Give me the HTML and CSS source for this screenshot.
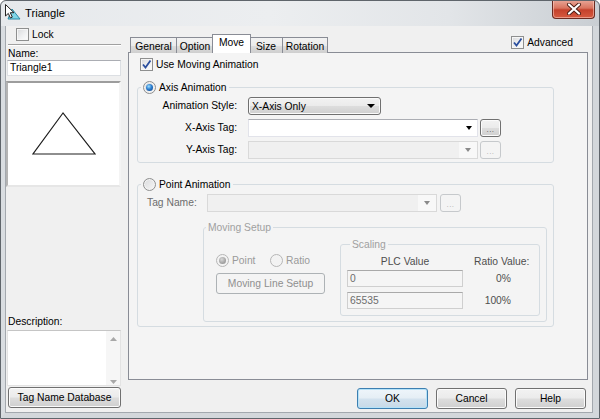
FILE: index.html
```html
<!DOCTYPE html>
<html>
<head>
<meta charset="utf-8">
<title>Triangle</title>
<link rel="stylesheet" href="styles.css">
</head>
<body>
<div class="window">
  <div class="titlebar">
    <svg class="appicon" width="18" height="18" viewBox="0 0 18 18">
      <polygon points="8,6 16,16 4,16" fill="#7fd6e8" stroke="#2a8aa6" stroke-width="1"/>
      <path d="M1.5 1.5 L1.5 13 L4.3 10.4 L6.4 15 L8.3 14.1 L6.3 9.7 L10 9.7 Z" fill="#fff" stroke="#222" stroke-width="1" stroke-linejoin="round"/>
    </svg>
    <span class="title">Triangle</span>
    <div class="close">
      <svg width="16" height="12" viewBox="0 0 16 12">
        <path d="M3 1.5 L13 10.5 M13 1.5 L3 10.5" stroke="#4a1d14" stroke-width="4" stroke-linecap="round"/>
        <path d="M3 1.5 L13 10.5 M13 1.5 L3 10.5" stroke="#ffffff" stroke-width="2.2" stroke-linecap="round"/>
      </svg>
    </div>
  </div>
  <div class="frame">
    <div class="client">
      <div class="left">
        <div class="chk lock"><span class="box"></span><span>Lock</span></div>
        <div class="sep"></div>
        <div class="lbl name-lbl">Name:</div>
        <div class="textbox name-box">Triangle1</div>
        <div class="preview">
          <svg width="111" height="102" viewBox="0 0 111 102">
            <polygon points="55,30 25,71 87,71" fill="none" stroke="#1e1e1e" stroke-width="1.2"/>
          </svg>
        </div>
        <div class="lbl desc-lbl">Description:</div>
        <div class="desc">
          <div class="vscroll">
            <svg class="sarrow" width="7" height="4" viewBox="0 0 7 4"><polygon points="0,4 3.5,0 7,4" fill="#a8a8a8"/></svg>
            <svg class="sarrow" width="7" height="4" viewBox="0 0 7 4"><polygon points="0,0 3.5,4 7,0" fill="#a8a8a8"/></svg>
          </div>
        </div>
        <div class="btn tnd">Tag Name Database</div>
      </div>

      <div class="right">
        <div class="tabrow">
          <div class="tabs">
            <div class="tab t-general">General</div>
            <div class="tab t-option">Option</div>
            <div class="tab sel t-move">Move</div>
            <div class="tab t-size">Size</div>
            <div class="tab t-rot">Rotation</div>
          </div>
          <div class="chk adv"><span class="box on"><svg width="11" height="11" viewBox="0 0 11 11"><path d="M2 5.5 L4.5 8.5 L9.5 1.5" fill="none" stroke="#2b4f9e" stroke-width="1.8"/></svg></span><span>Advanced</span></div>
        </div>

        <div class="panel">
          <div class="chk usemove"><span class="box on"><svg width="11" height="11" viewBox="0 0 11 11"><path d="M2 5.5 L4.5 8.5 L9.5 1.5" fill="none" stroke="#2b4f9e" stroke-width="1.8"/></svg></span><span>Use Moving Animation</span></div>

          <fieldset class="group g-axis">
            <legend><span class="radio on"></span><span>Axis Animation</span></legend>
            <div class="axis-grid">
              <div class="rlbl">Animation Style:</div>
              <div class="ctlrow"><div class="dropdown"><span>X-Axis Only</span><span class="arrow"></span></div></div>
              <div class="rlbl">X-Axis Tag:</div>
              <div class="ctlrow"><div class="combo"><span></span><span class="arrow"></span></div><div class="dots">...</div></div>
              <div class="rlbl">Y-Axis Tag:</div>
              <div class="ctlrow"><div class="combo disabled"><span></span><span class="cbtn"><span class="arrow"></span></span></div><div class="dots disabled">...</div></div>
            </div>
          </fieldset>

          <fieldset class="group g-point">
            <legend><span class="radio"></span><span>Point Animation</span></legend>
            <div class="tagrow">
              <div class="tlbl">Tag Name:</div>
              <div class="combo disabled"><span></span><span class="cbtn"><span class="arrow"></span></span></div>
              <div class="dots disabled">...</div>
            </div>
            <fieldset class="group g-moving">
              <legend class="dimtext">Moving Setup</legend>
              <div class="moving-body">
                <div class="moving-left">
                  <div class="radios">
                    <div class="ropt"><span class="radio dis on"></span><span>Point</span></div>
                    <div class="ropt"><span class="radio dis"></span><span>Ratio</span></div>
                  </div>
                  <div class="btn disabled mls">Moving Line Setup</div>
                </div>
                <fieldset class="group g-scaling">
                  <legend class="dimtext">Scaling</legend>
                  <div class="scale-grid">
                    <div class="sh c1">PLC Value</div>
                    <div class="sh c2">Ratio Value:</div>
                    <div class="textbox dis-box">0</div>
                    <div class="pct">0%</div>
                    <div class="textbox dis-box">65535</div>
                    <div class="pct">100%</div>
                  </div>
                </fieldset>
              </div>
            </fieldset>
          </fieldset>
        </div>

        <div class="btnrow">
          <div class="btn default">OK</div>
          <div class="btn">Cancel</div>
          <div class="btn">Help</div>
        </div>
      </div>
    </div>
  </div>
</div>
</body>
</html>
```

FILE: styles.css
```css
* { box-sizing: border-box; }
html, body { margin: 0; padding: 0; }
body {
  width: 600px;
  height: 419px;
  overflow: hidden;
  font-family: "Liberation Sans", Arial, sans-serif;
  font-size: 10.3px;
  color: #000;
  background: #ffffff;
}

.window {
  width: 600px;
  height: 419px;
  border: 1px solid #5f656b;
  border-radius: 6px 6px 0 0;
  background: linear-gradient(to right, #e6e9ec 0%, #eceef0 45%, #e2e5e8 75%, #c9ced3 100%);
  display: flex;
  flex-direction: column;
  overflow: hidden;
}

.titlebar {
  height: 25px;
  display: flex;
  align-items: flex-start;
  padding-left: 3px;
}
.appicon { margin-top: 2px; flex: none; }
.title {
  margin-left: 3px;
  margin-top: 5px;
  font-size: 11.2px;
  line-height: 14px;
  color: #000;
}
.close {
  margin-left: auto;
  margin-right: 4px;
  margin-top: -1px;
  width: 43px;
  height: 19px;
  border: 1px solid #6b2a20;
  border-top: none;
  border-radius: 0 0 4px 4px;
  background: linear-gradient(#e9a899 0%, #d9745f 45%, #c4412b 55%, #d65a3f 100%);
  box-shadow: inset 0 0 0 1px rgba(255,220,210,0.5);
  display: flex;
  align-items: center;
  justify-content: center;
}

.frame {
  flex: 1;
  border-left: 4px solid #d9dde1;
  border-right: 6px solid #d3d7db;
  border-bottom: 5px solid #d3d7db;
  display: flex;
}
.client {
  flex: 1;
  background: #f0f0f0;
  border: 1px solid #a3a8ae;
  border-top: none;
  display: flex;
  width: 586px;
}

/* ---------- left column ---------- */
.left {
  width: 122px;
  flex: none;
  display: flex;
  flex-direction: column;
}
.chk { display: flex; align-items: center; line-height: 13px; }
.box {
  width: 13px;
  height: 13px;
  flex: none;
  border: 1px solid #8e8f8f;
  background: linear-gradient(135deg, #d8d9db 0%, #f1f2f3 60%, #fcfcfc 100%);
  box-shadow: inset 0 0 0 1px #f6f6f6;
  margin-right: 3px;
  display: flex;
  align-items: center;
  justify-content: center;
}
.lock { margin-top: 2px; padding-left: 10px; }
.sep {
  margin: 3px 7px 0 2px;
  height: 2px;
  border-top: 1px solid #a0a0a0;
  border-bottom: 1px solid #ffffff;
}
.lbl { line-height: 12px; padding-left: 2px; }
.name-lbl { margin-top: 2px; }
.textbox {
  background: #fff;
  border: 1px solid #dcdfe3;
  border-top-color: #abadb3;
  line-height: 14px;
  padding-left: 2px;
}
.name-box { margin-left: 1px; width: 114px; height: 16px; }
.preview {
  margin-top: 5px;
  width: 115px;
  height: 106px;
  background: #fff;
  border-top: 2px solid #9d9d9d;
  border-left: 2px solid #b4b4b4;
  border-right: 2px solid #f4f4f4;
  border-bottom: 2px solid #e6e6e6;
}
.preview svg { display: block; }
.desc-lbl { margin-top: auto; }
.desc {
  margin-top: 2px;
  margin-left: 1px;
  width: 114px;
  height: 56px;
  background: #fff;
  border: 1px solid #e3e3e3;
  border-top-color: #c5c5c5;
  display: flex;
  justify-content: flex-end;
}
.vscroll {
  width: 14px;
  background: #f6f6f6;
  display: flex;
  flex-direction: column;
  justify-content: space-between;
  align-items: center;
  padding: 6px 0 1px;
}
.sarrow { display: block; }

.btn {
  height: 21px;
  border: 1px solid #707070;
  border-radius: 3px;
  background: linear-gradient(#f2f2f2 0%, #ebebeb 48%, #dddddd 52%, #cfcfcf 100%);
  box-shadow: inset 0 0 0 1px #fbfbfb;
  display: flex;
  align-items: center;
  justify-content: center;
  line-height: 13px;
  color: #000;
}
.tnd { margin: 1px 0 4px 2px; width: 113px; }

/* ---------- right column ---------- */
.right {
  flex: 1;
  display: flex;
  flex-direction: column;
}
.tabrow {
  height: 26px;
  display: flex;
  align-items: flex-end;
  padding-left: 2px;
  position: relative;
  z-index: 1;
}
.tabs { display: flex; align-items: flex-end; }
.tab {
  height: 16px;
  margin-bottom: -1px;
  border: 1px solid #898c95;
  border-bottom: none;
  margin-right: -1px;
  background: linear-gradient(#f2f2f2 0%, #ebebeb 50%, #dddddd 51%, #cfcfcf 100%);
  display: flex;
  align-items: center;
  justify-content: center;
  line-height: 13px;
  padding-top: 1px;
}
.tab.sel {
  height: 19px;
  background: #ffffff;
  margin-left: -1px;
  margin-right: -2px;
  position: relative;
  z-index: 2;
  padding-top: 0;
  padding-bottom: 3px;
}
.t-general { width: 47px; }
.t-option { width: 38px; }
.t-move { width: 39px; }
.t-size { width: 34px; }
.t-rot { width: 46px; }

.adv { margin-left: auto; margin-right: 19px; align-self: flex-start; margin-top: 10px; }

.panel {
  height: 328px;
  margin-right: 4px;
  border: 1px solid #898c95;
  background: #f4f4f4;
  display: flex;
  flex-direction: column;
  align-items: flex-start;
}
.usemove { margin-top: 5px; margin-left: 11px; }

.group {
  margin: 0;
  padding: 0;
  min-width: 0;
  border: 1px solid #d5dce1;
  border-radius: 3px;
}
.group legend {
  padding: 0 2px;
  line-height: 13px;
}
.group > legend > span { display: inline-block; vertical-align: top; }
.radio {
  width: 13px;
  height: 13px;
  border-radius: 50%;
  border: 1px solid #8e8f8f;
  background: linear-gradient(135deg, #d9dadc, #f7f7f7);
  box-shadow: inset 0 0 0 1px #f3f3f3;
  margin-right: 3px;
  position: relative;
  flex: none;
  display: inline-block;
}
.radio.on::after {
  content: "";
  position: absolute;
  left: 2px;
  top: 2px;
  width: 7px;
  height: 7px;
  border-radius: 50%;
  background: radial-gradient(circle at 40% 35%, #9fe0ff 0%, #2d7fd0 45%, #0d3b7e 100%);
}
.radio.dis { border-color: #b6b6b6; background: #f2f2f2; }
.radio.dis.on::after { background: radial-gradient(circle at 40% 35%, #d8d8d8 0%, #a3a3a3 60%, #8a8a8a 100%); }

.g-axis { margin-top: 10px; margin-left: 8px; width: 417px; padding: 0 0 3px 0; }
.g-axis legend { margin-left: 3px; }
.axis-grid {
  margin-top: 3px;
  display: grid;
  grid-template-columns: 99px 1fr;
  column-gap: 11px;
  row-gap: 4px;
  grid-auto-rows: 18px;
}
.rlbl { text-align: right; line-height: 18px; color: #000; }
.ctlrow { display: flex; gap: 1px; }

.dropdown {
  width: 133px;
  height: 18px;
  border: 1px solid #707070;
  border-radius: 3px;
  background: linear-gradient(#f2f2f2 0%, #ebebeb 48%, #dddddd 52%, #cfcfcf 100%);
  box-shadow: inset 0 0 0 1px #fafafa;
  display: flex;
  align-items: center;
  justify-content: space-between;
  padding: 0 5px 0 3px;
  line-height: 13px;
}
.arrow {
  width: 0;
  height: 0;
  border-left: 4px solid transparent;
  border-right: 4px solid transparent;
  border-top: 4px solid #000;
  display: block;
}
.combo {
  width: 230px;
  height: 18px;
  background: #fff;
  border: 1px solid #e2e3ea;
  border-top-color: #abadb3;
  display: flex;
  align-items: center;
  justify-content: space-between;
  padding: 0 5px 0 3px;
}
.combo .arrow { border-left-width: 3.5px; border-right-width: 3.5px; border-top-width: 4px; }
.combo.disabled {
  background: #f0f0f0;
  border-color: #d9d9d9;
  padding: 0;
}
.combo.disabled .cbtn {
  width: 18px;
  height: 100%;
  background: #f8f8f8;
  display: flex;
  align-items: center;
  justify-content: center;
}
.combo.disabled .arrow { border-top-color: #8a8a8a; }
.dots {
  width: 21px;
  height: 18px;
  margin-left: 1px;
  border: 1px solid #707070;
  border-radius: 3px;
  background: linear-gradient(#f2f2f2 0%, #ebebeb 48%, #dddddd 52%, #cfcfcf 100%);
  box-shadow: inset 0 0 0 1px #fbfbfb;
  font-size: 8px;
  line-height: 8px;
  letter-spacing: 0.5px;
  color: #555;
  display: flex;
  align-items: center;
  justify-content: center;
  padding-top: 3px;
}
.dots.disabled {
  border-color: #c6c9cc;
  background: #f4f4f4;
  box-shadow: none;
  color: #b0b0b0;
}

.g-point { margin-top: 15px; margin-left: 8px; width: 417px; padding: 0 0 4px 0; }
.g-point legend { margin-left: 3px; }
.tagrow { margin-top: 3px; display: flex; align-items: center; padding-left: 9px; }
.tlbl { width: 60px; color: #6d6d6d; line-height: 18px; }
.tagrow .dots { margin-left: 3px; }

.g-moving { margin-top: 9px; margin-left: 65px; width: 344px; padding: 0 0 5px 0; }
.g-moving > legend { margin-left: 2px; }
.dimtext { color: #a0a0a0; }
.moving-body { display: flex; align-items: flex-start; }
.moving-left { width: 136px; padding-left: 12px; flex: none; }
.radios { margin-top: 20px; display: flex; height: 13px; }
.ropt { display: flex; align-items: center; color: #9a9a9a; line-height: 13px; width: 54px; }
.ropt .radio { margin-right: 3px; }
.btn.disabled {
  border-color: #adb2b5;
  background: #f4f4f4;
  box-shadow: none;
  color: #8f8f8f;
}
.mls { margin-top: 6px; width: 109px; }

.g-scaling { margin-top: 4px; width: 200px; padding: 0 0 6px 6px; }
.g-scaling > legend { margin-left: 3px; }
.scale-grid {
  margin-top: 1px;
  display: grid;
  grid-template-columns: 116px 56px;
  column-gap: 11px;
  row-gap: 5px;
  grid-template-rows: 13px 17px 17px;
  align-items: center;
}
.scale-grid .sh { color: #4e4e4e; line-height: 13px; }
.sh.c1 { text-align: center; }
.sh.c2 { white-space: nowrap; }
.scale-grid .sh { margin-bottom: -5px; }
.dis-box {
  height: 17px;
  background: #f5f5f5;
  border: 1px solid #cfcfcf;
  border-top-color: #a9a9a9;
  color: #6d6d6d;
  line-height: 15px;
}
.pct { text-align: right; padding-right: 19px; color: #4e4e4e; }

.btnrow {
  flex: 1;
  display: flex;
  justify-content: flex-end;
  align-items: flex-start;
  padding: 8px 6px 0 0;
  gap: 8px;
}
.btnrow .btn { width: 71px; }
.btn.default {
  border-color: #3c7fb1;
  box-shadow: inset 0 0 0 1px #b5e2f8;
  background: linear-gradient(#eef5fa 0%, #e5eef5 48%, #d3e2ee 52%, #c7d9e7 100%);
}
```
